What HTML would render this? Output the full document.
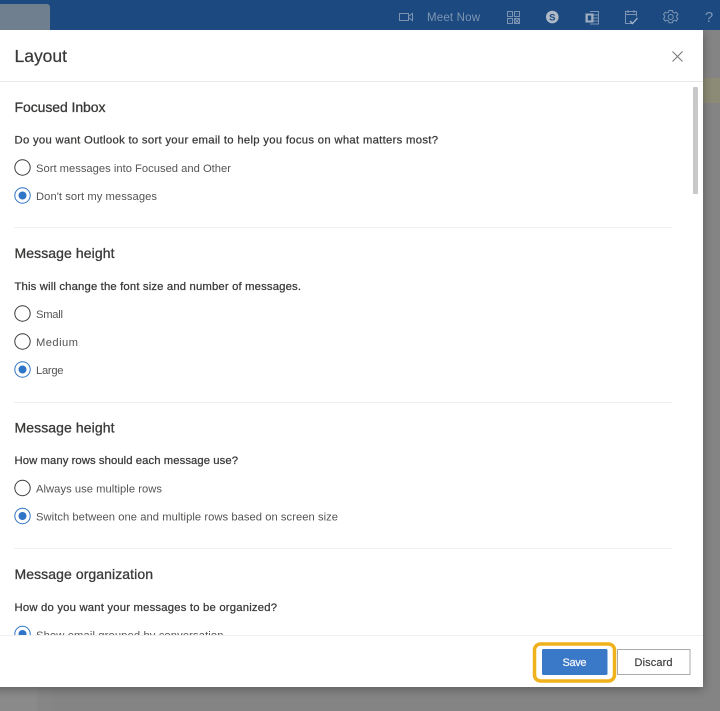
<!DOCTYPE html>
<html>
<head>
<meta charset="utf-8">
<title>Layout</title>
<style>
html,body{margin:0;padding:0;width:720px;height:711px;overflow:hidden;background:#868686}
svg{display:block;position:absolute;left:0;top:0;filter:blur(.3px)}
text{font-family:"Liberation Sans",sans-serif}
.h{font-size:14px;fill:#3a3938;stroke:#3a3938;stroke-width:.3}
.q{font-size:11.3px;fill:#3a3938;stroke:#3a3938;stroke-width:.25}
.o{font-size:11.2px;fill:#555453}
.d{stroke:#efefef;stroke-width:1}
.r{fill:#fff;stroke:#3b3a39;stroke-width:1}
.rs{fill:#fff;stroke:#2f74c6;stroke-width:1}
.rd{fill:#2f74c6}
.i{fill:none;stroke:#7d95b3;stroke-width:1}
</style>
</head>
<body>
<svg width="720" height="711" viewBox="0 0 720 711" xmlns="http://www.w3.org/2000/svg">
<defs>
<filter id="sh" x="-5%" y="-5%" width="110%" height="110%"><feGaussianBlur stdDeviation="5"/></filter>
<clipPath id="c"><rect x="0" y="82" width="703" height="553"/></clipPath>
</defs>

<!-- backdrop -->
<rect x="0" y="0" width="720" height="711" fill="#848484"/>
<rect x="703" y="78" width="17" height="25" fill="#8b8b76"/>
<rect x="0" y="687" width="37" height="24" fill="#8a8a8a"/>
<rect x="37" y="687" width="15" height="24" fill="#868686"/>
<rect x="-20" y="32" width="723" height="657" fill="#000" opacity=".32" filter="url(#sh)"/>

<!-- top bar -->
<rect x="0" y="0" width="720" height="30" fill="#1c4a80"/>
<rect x="-6" y="4" width="56" height="30" rx="3" fill="#6f7f90"/>

<!-- video -->
<rect class="i" x="399.5" y="13.5" width="9" height="7"/>
<path class="i" d="M409 16l3.5-2.5v7L409 18"/>
<text x="427" y="21" font-size="11.5" fill="#7d95b3" textLength="53" lengthAdjust="spacing">Meet Now</text>
<!-- qr -->
<g class="i">
<rect x="507.5" y="11.5" width="5" height="5"/><rect x="514.5" y="11.5" width="5" height="5"/>
<rect x="507.5" y="18.5" width="5" height="5"/><rect x="514.5" y="18.5" width="5" height="5"/>
<path d="M514.5 18.5l5 5M519.5 18.5l-5 5"/>
</g>
<rect x="509.5" y="13.5" width="1" height="1" fill="#7d95b3"/><rect x="516.5" y="13.5" width="1" height="1" fill="#7d95b3"/><rect x="509.5" y="20.5" width="1" height="1" fill="#7d95b3"/>
<!-- skype -->
<circle cx="552.3" cy="17" r="6.3" fill="#b0bac6"/>
<text x="552.3" y="20.5" font-size="9.5" font-weight="bold" fill="#1c4a80" text-anchor="middle">S</text>
<!-- outlook -->
<path class="i" d="M590 11.5h8.5v12.5H590"/>
<path class="i" d="M593 15h5.5M593 18h5.5M593 21h5.5"/>
<rect x="585.5" y="13.5" width="8" height="9" fill="#a0aec0"/>
<rect x="587.8" y="15.5" width="3.4" height="5" fill="#1c4a80"/>
<!-- tasks -->
<path class="i" d="M632 23.5h-6.5v-12h11v5"/>
<path class="i" d="M625.5 14.5h11M628 10v3M634 10v3"/>
<path d="M630 21l2.5 2.5 5-5.5" fill="none" stroke="#a9b8ca" stroke-width="1.3"/>
<!-- gear -->
<circle class="i" cx="670.7" cy="17" r="2.5"/>
<path class="i" d="M669 10.5h3.4l.5 1.8 1.7.7 1.6-.9 1.7 2.4-1.2 1.4v1.4l1.2 1.4-1.7 2.4-1.6-.9-1.7.7-.5 1.8H669l-.5-1.8-1.7-.7-1.6.9-1.7-2.4 1.2-1.4v-1.4l-1.2-1.4 1.7-2.4 1.6.9 1.7-.7z"/>
<!-- help -->
<text x="709" y="22" font-size="15" fill="#7d95b3" text-anchor="middle">?</text>

<!-- modal -->
<rect x="0" y="30" width="703" height="657" fill="#fff"/>
<text x="14.5" y="62" font-size="17.5" fill="#3a3938" stroke="#3a3938" stroke-width=".2" textLength="52.5" lengthAdjust="spacing">Layout</text>
<path d="M672.5 51.5l10 10M682.5 51.5l-10 10" stroke="#777" stroke-width="1" fill="none"/>
<line x1="0" y1="81.5" x2="703" y2="81.5" stroke="#e8e8e8"/>

<!-- scrollbar -->
<rect x="693" y="87" width="5" height="107" rx="1" fill="#c8c8c8"/>

<g clip-path="url(#c)">
<text class="h" x="14.5" y="112" textLength="91" lengthAdjust="spacing">Focused Inbox</text>
<text class="q" x="14.5" y="143.5" textLength="423.5" lengthAdjust="spacing">Do you want Outlook to sort your email to help you focus on what matters most?</text>
<circle class="r" cx="22.5" cy="167.5" r="7.7"/>
<text class="o" x="36" y="172" textLength="195" lengthAdjust="spacing">Sort messages into Focused and Other</text>
<circle class="rs" cx="22.5" cy="195.5" r="7.7"/><circle class="rd" cx="22.5" cy="195.5" r="4"/>
<text class="o" x="36" y="200" textLength="121" lengthAdjust="spacing">Don't sort my messages</text>
<line class="d" x1="14" y1="227.5" x2="672" y2="227.5"/>

<text class="h" x="14.5" y="258" textLength="100" lengthAdjust="spacing">Message height</text>
<text class="q" x="14.5" y="290" textLength="286.5" lengthAdjust="spacing">This will change the font size and number of messages.</text>
<circle class="r" cx="22.5" cy="313.5" r="7.7"/>
<text class="o" x="36" y="318" textLength="27" lengthAdjust="spacing">Small</text>
<circle class="r" cx="22.5" cy="341.5" r="7.7"/>
<text class="o" x="36" y="346" textLength="42" lengthAdjust="spacing">Medium</text>
<circle class="rs" cx="22.5" cy="369.5" r="7.7"/><circle class="rd" cx="22.5" cy="369.5" r="4"/>
<text class="o" x="36" y="374" textLength="27.5" lengthAdjust="spacing">Large</text>
<line class="d" x1="14" y1="402.5" x2="672" y2="402.5"/>

<text class="h" x="14.5" y="432.5" textLength="100" lengthAdjust="spacing">Message height</text>
<text class="q" x="14.5" y="464" textLength="223.5" lengthAdjust="spacing">How many rows should each message use?</text>
<circle class="r" cx="22.5" cy="488" r="7.7"/>
<text class="o" x="36" y="492.5" textLength="126" lengthAdjust="spacing">Always use multiple rows</text>
<circle class="rs" cx="22.5" cy="516" r="7.7"/><circle class="rd" cx="22.5" cy="516" r="4"/>
<text class="o" x="36" y="520.5" textLength="302" lengthAdjust="spacing">Switch between one and multiple rows based on screen size</text>
<line class="d" x1="14" y1="548.5" x2="672" y2="548.5"/>

<text class="h" x="14.5" y="579" textLength="138.5" lengthAdjust="spacing">Message organization</text>
<text class="q" x="14.5" y="611" textLength="262.5" lengthAdjust="spacing">How do you want your messages to be organized?</text>
<circle class="rs" cx="22.5" cy="634" r="7.7"/><circle class="rd" cx="22.5" cy="634" r="4"/>
<text class="o" x="36" y="639" textLength="187.5" lengthAdjust="spacing">Show email grouped by conversation</text>
</g>

<!-- footer -->
<line x1="0" y1="635.5" x2="703" y2="635.5" stroke="#efefef"/>
<rect x="534.5" y="644" width="80" height="37" rx="6" fill="#fff" stroke="#f0b21c" stroke-width="3.5"/>
<rect x="542" y="649" width="65.5" height="26" rx="1.5" fill="#3a79c8"/>
<text x="562.5" y="666" font-size="11" fill="#f4f8fc" stroke="#f4f8fc" stroke-width=".2" textLength="24" lengthAdjust="spacing">Save</text>
<rect x="617.5" y="649.5" width="72.5" height="25" fill="#fff" stroke="#ababab"/>
<text x="634.5" y="666" font-size="11" fill="#3a3938" stroke="#3a3938" stroke-width=".15" textLength="38" lengthAdjust="spacing">Discard</text>
</svg>
</body>
</html>
